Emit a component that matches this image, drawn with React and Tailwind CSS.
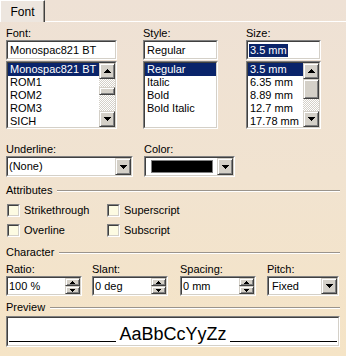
import React from 'react';

const Sunken = ({ className = '', inner = 'bg-white', children }) => (
  <div className={`border border-t-[#808080] border-l-[#808080] border-b-white border-r-white ${className}`}>
    <div className={`h-full w-full border border-t-[#404040] border-l-[#404040] border-b-[#d4d0c8] border-r-[#d4d0c8] ${inner}`}>
      {children}
    </div>
  </div>
);

const Raised = ({ className = '', children }) => (
  <div className={`flex items-center justify-center bg-[#d4d0c8] border border-t-[#d4d0c8] border-l-[#d4d0c8] border-b-[#404040] border-r-[#404040] shadow-[inset_1px_1px_0_#fff,inset_-1px_-1px_0_#808080] ${className}`}>
    {children}
  </div>
);

const Down = () => (
  <svg width="7" height="4" viewBox="0 0 7 4"><path d="M0 0h7v1h-1v1h-1v1h-1v1h-1v-1h-1v-1h-1v-1h-1z" fill="#000" /></svg>
);
const Up = () => (
  <svg width="7" height="4" viewBox="0 0 7 4"><path d="M0 4h7v-1h-1v-1h-1v-1h-1v-1h-1v1h-1v1h-1v1h-1z" fill="#000" /></svg>
);
const SmallUp = () => (
  <svg width="5" height="3" viewBox="0 0 5 3"><path d="M0 3h5v-1h-1v-1h-1v-1h-1v1h-1v1h-1z" fill="#000" /></svg>
);
const SmallDown = () => (
  <svg width="5" height="3" viewBox="0 0 5 3"><path d="M0 0h5v1h-1v1h-1v1h-1v-1h-1v-1h-1z" fill="#000" /></svg>
);

const track = 'bg-[image:repeating-conic-gradient(#d4d0c8_0_25%,#ffffff_0_50%)] bg-[length:2px_2px]';

const Scrollbar = ({ before, thumb, after }) => (
  <div className="flex flex-col w-[16px] h-full">
    <Raised className="w-[16px] h-[16px]"><Up /></Raised>
    <div className={`h-[${before}px] ${track}`} style={{ height: before }} />
    <Raised className="w-[16px]"><div style={{ height: thumb - 2 }} /></Raised>
    <div className={track} style={{ height: after }} />
    <Raised className="w-[16px] h-[16px]"><Down /></Raised>
  </div>
);

const ListBox = ({ items, selected, className, scroll }) => (
  <Sunken className={`h-[68px] mt-[1px] ${className}`}>
    <div className="flex h-full">
      <div className="flex-1 overflow-hidden">
        {items.map((it) => (
          <div
            key={it}
            className={`h-[13px] leading-[13px] pl-[2px] whitespace-nowrap ${it === selected ? 'bg-[#0a246a] text-white' : ''}`}
          >
            {it}
          </div>
        ))}
      </div>
      {scroll}
    </div>
  </Sunken>
);

const Label = ({ children }) => <div className="h-[13px] leading-[13px]">{children}</div>;

const Select = ({ className, children }) => (
  <Sunken className={className}>
    <div className="flex h-full">
      <div className="flex-1 flex items-center pl-[1px] leading-[13px]">{children}</div>
      <Raised className="w-[16px] h-full"><Down /></Raised>
    </div>
  </Sunken>
);

const Spin = ({ label, value, className }) => (
  <div className={className}>
    <Label>{label}</Label>
    <Sunken className="w-[76px] h-[20px]">
      <div className="flex h-full">
        <div className="flex-1 flex items-center pl-[1px]">{value}</div>
        <div className="flex flex-col w-[15px] h-full">
          <Raised className="w-[15px] h-[8px]"><SmallUp /></Raised>
          <Raised className="w-[15px] h-[8px]"><SmallDown /></Raised>
        </div>
      </div>
    </Sunken>
  </div>
);

const Check = ({ label, className = '' }) => (
  <div className={`flex items-center h-[13px] ${className}`}>
    <Sunken className="w-[13px] h-[13px]" inner="bg-[#fdfbe2]" />
    <span className="ml-[4px] leading-[13px]">{label}</span>
  </div>
);

const Group = ({ title, className = '' }) => (
  <div className={`flex items-center h-[13px] ${className}`}>
    <span className="leading-[13px]">{title}</span>
    <div className="flex-1 ml-[5px] border-t border-t-[#9a948c] border-b border-b-white" />
  </div>
);

export default function App() {
  return (
    <div className="w-[346px] h-[356px] overflow-hidden text-[11px] text-black bg-[linear-gradient(to_bottom,#eee1d5,#f1e3d0_50%,#f5e4c6)] font-['Liberation_Sans',Arial,sans-serif]">
      <div className="flex h-[22px]">
        <div className="w-[45px] h-[22px] bg-[#ede6df] border-t border-l border-t-white border-l-white border-r border-r-[#404040] shadow-[inset_-1px_0_0_#9a948c] flex justify-center pt-[5px] text-[12px] leading-[13px]">
          Font
        </div>
        <div className="flex-1" />
      </div>

      <div className="border-t border-t-white ml-[45px] -mt-px" />

      <div className="flex flex-col pl-[6px] pr-[6px] pt-[5px]">
        <div className="flex">
          <div className="w-[111px]">
            <Label>Font:</Label>
            <Sunken className="h-[20px]">
              <div className="h-full flex items-center pl-[2px]">Monospac821 BT</div>
            </Sunken>
            <ListBox
              items={['Monospac821 BT', 'ROM1', 'ROM2', 'ROM3', 'SICH']}
              selected="Monospac821 BT"
              scroll={<Scrollbar before={8} thumb={8} after={16} />}
            />
          </div>
          <div className="w-[75px] ml-[26px]">
            <Label>Style:</Label>
            <Sunken className="h-[20px]">
              <div className="h-full flex items-center pl-[2px]">Regular</div>
            </Sunken>
            <ListBox items={['Regular', 'Italic', 'Bold', 'Bold Italic']} selected="Regular" />
          </div>
          <div className="w-[75px] ml-[28px]">
            <Label>Size:</Label>
            <Sunken className="h-[20px]">
              <div className="h-full flex items-center pl-[1px]">
                <span className="bg-[#0a246a] text-white px-[1px] leading-[13px]">3.5 mm</span>
              </div>
            </Sunken>
            <ListBox
              items={['3.5 mm', '6.35 mm', '8.89 mm', '12.7 mm', '17.78 mm']}
              selected="3.5 mm"
              scroll={<Scrollbar before={0} thumb={20} after={12} />}
            />
          </div>
        </div>

        <div className="flex mt-[14px]">
          <div className="w-[127px]">
            <Label>Underline:</Label>
            <Select className="h-[21px]">(None)</Select>
          </div>
          <div className="w-[91px] ml-[11px]">
            <Label>Color:</Label>
            <Select className="h-[21px]">
              <div className="pl-[4px] pr-[4px] flex-1">
                <div className="h-[13px] bg-black border border-[#808080]" />
              </div>
            </Select>
          </div>
        </div>

        <Group title="Attributes" className="mt-[7px]" />
        <div className="flex mt-[7px] pl-[1px]">
          <Check label="Strikethrough" className="w-[100px]" />
          <Check label="Superscript" />
        </div>
        <div className="flex mt-[7px] pl-[1px]">
          <Check label="Overline" className="w-[100px]" />
          <Check label="Subscript" />
        </div>

        <Group title="Character" className="mt-[9px]" />
        <div className="flex mt-[4px]">
          <Spin label="Ratio:" value="100 %" />
          <Spin label="Slant:" value="0 deg" className="ml-[10px]" />
          <Spin label="Spacing:" value="0 mm" className="ml-[12px]" />
          <div className="ml-[11px] w-[72px]">
            <Label>Pitch:</Label>
            <Select className="h-[20px]"><span className="pl-[2px]">Fixed</span></Select>
          </div>
        </div>

        <Group title="Preview" className="mt-[5px]" />
        <Sunken className="h-[31px] mt-[2px]">
          <div className="flex items-end h-full px-[1px] pb-[2px]">
            <div className="flex-1 h-px bg-black mb-[1px]" />
            <span className="mx-[3px] text-[18px] leading-[18px]">AaBbCcYyZz</span>
            <div className="flex-1 h-px bg-black mb-[1px]" />
          </div>
        </Sunken>
      </div>
    </div>
  );
}
